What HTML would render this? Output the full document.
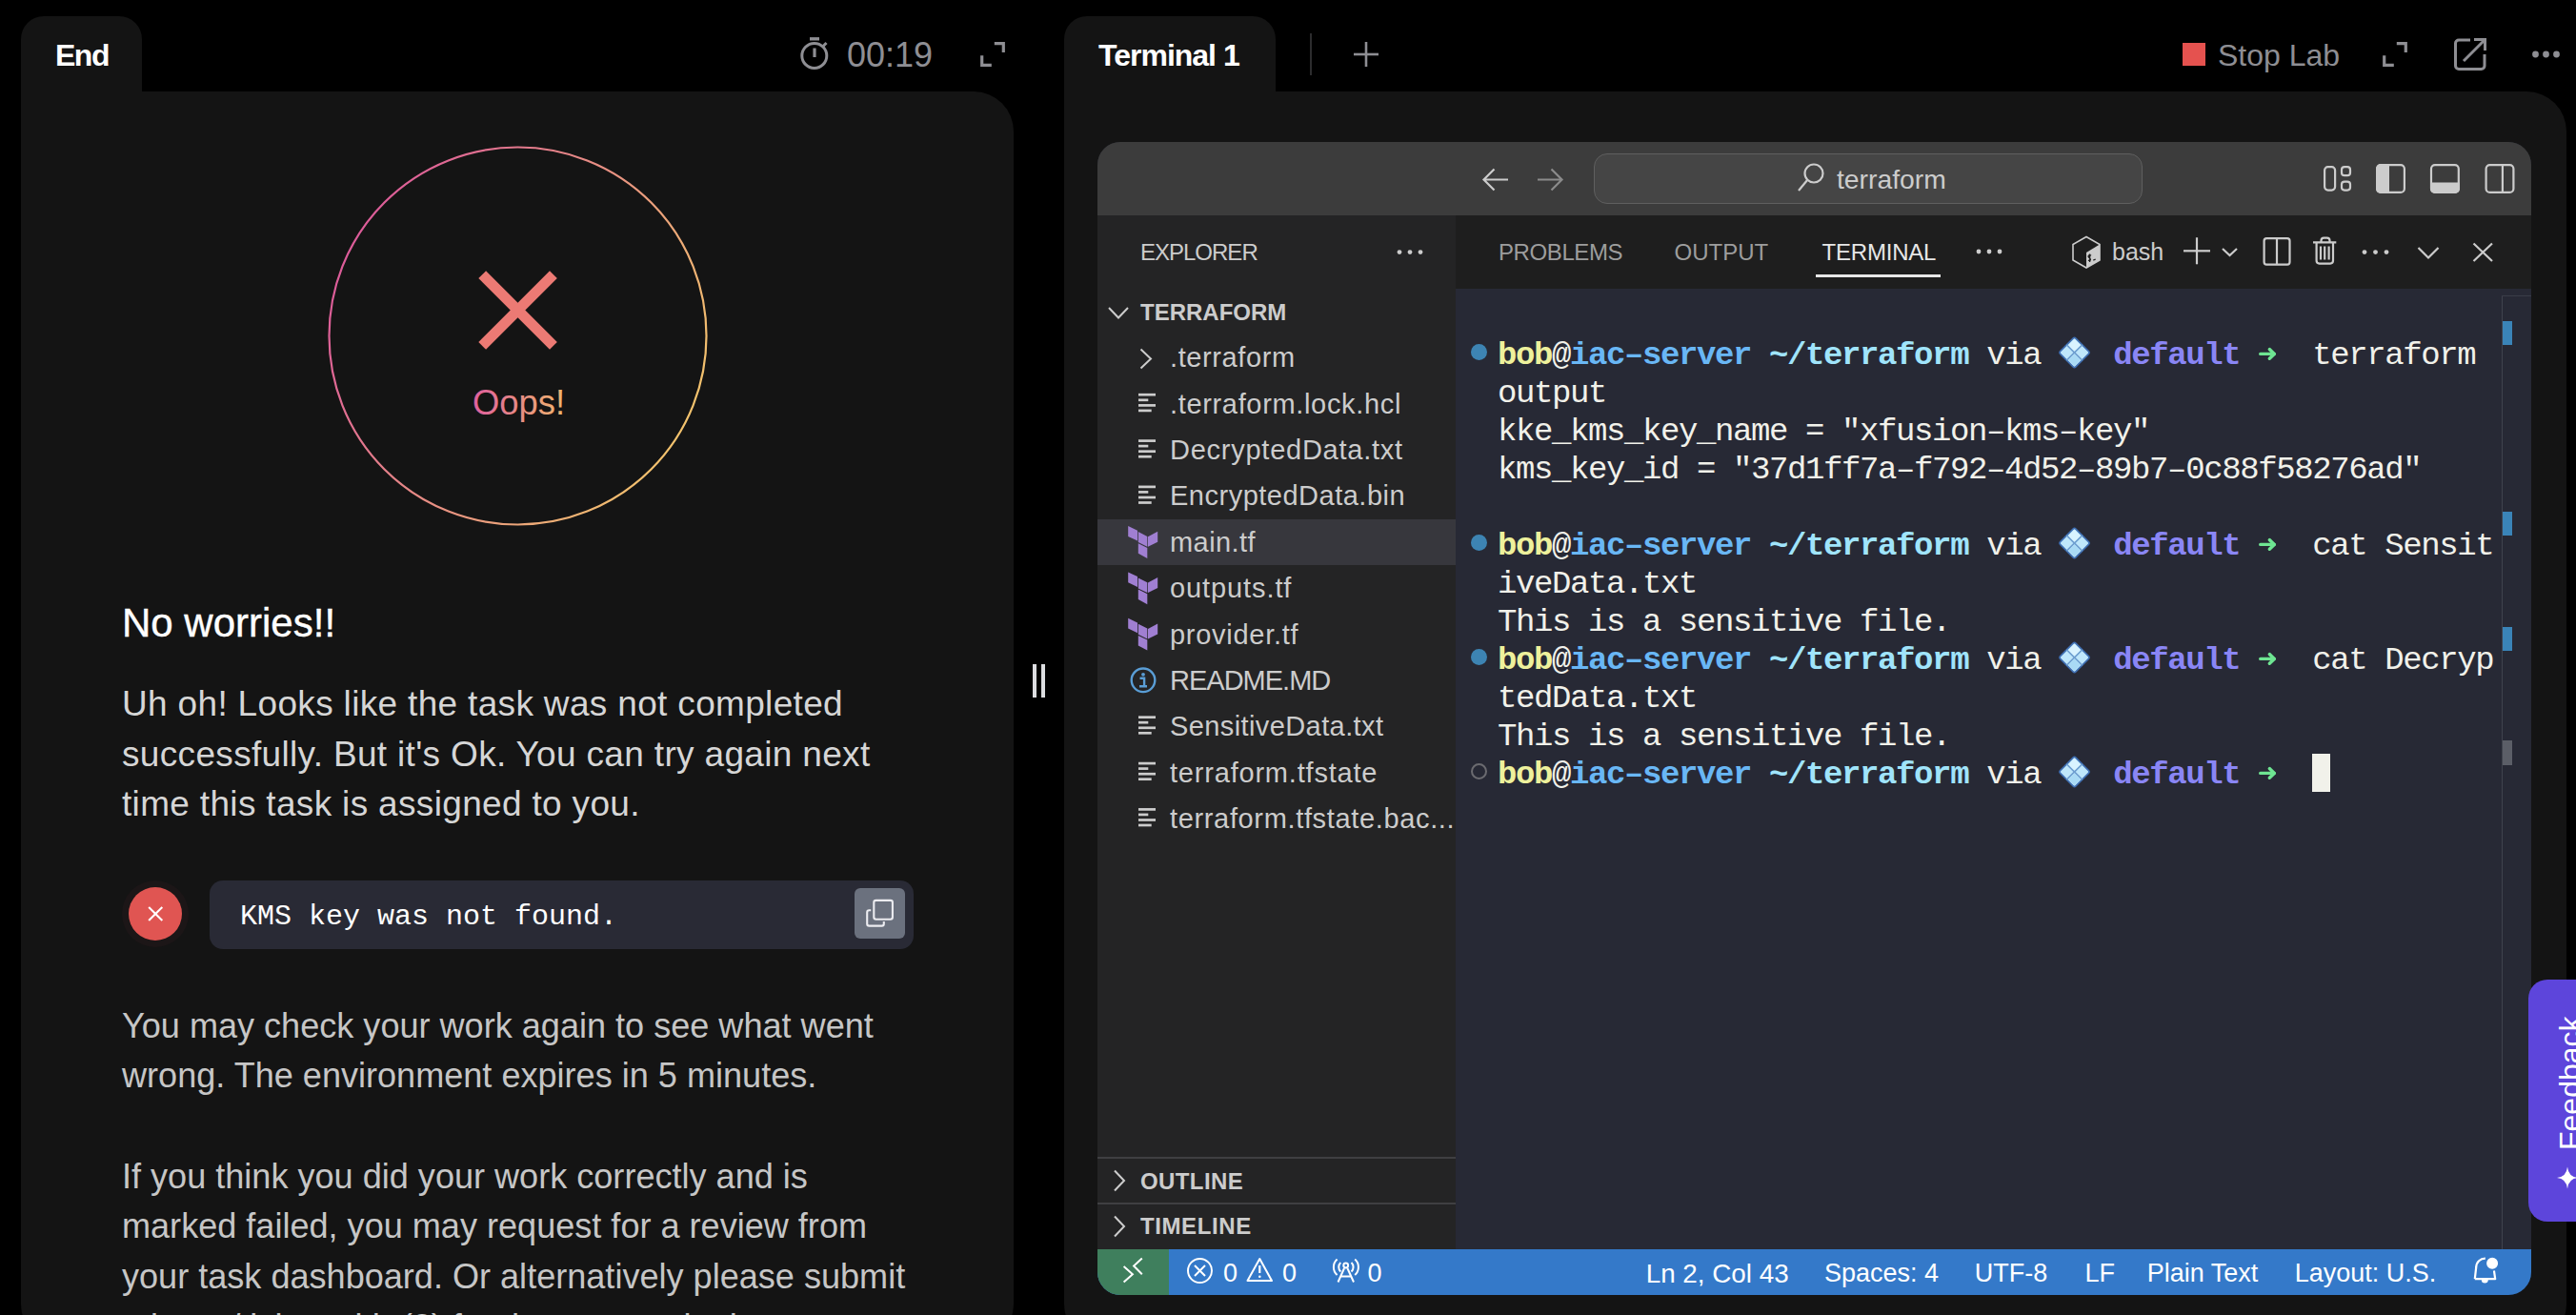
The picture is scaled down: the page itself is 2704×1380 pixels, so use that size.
<!DOCTYPE html>
<html><head><meta charset="utf-8">
<style>
*{margin:0;padding:0;box-sizing:border-box}
html,body{width:2704px;height:1380px;overflow:hidden;background:#000;font-family:"Liberation Sans",sans-serif}
.a{position:absolute}
.t{position:absolute;white-space:pre;line-height:1}
.m{font-family:"Liberation Mono",monospace}
svg{position:absolute;overflow:visible}
</style></head><body>

<!-- ============ LEFT PANEL ============ -->
<div class="a" style="left:22px;top:17px;width:127px;height:100px;background:#141414;border-radius:24px 24px 0 0"></div>
<div class="a" style="left:22px;top:96px;width:1042px;height:1315px;background:#141414;border-radius:0 42px 42px 42px"></div>
<div class="t" style="left:58px;top:41.8px;font-size:32px;font-weight:700;color:#fff;letter-spacing:-1.5px">End</div>

<!-- timer -->
<svg style="left:0;top:0" width="1" height="1">
  <g fill="none" stroke="#8e8e93" stroke-width="3">
    <circle cx="854.8" cy="58.4" r="13"/>
    <line x1="855" y1="50.5" x2="855" y2="60" stroke-width="3.2"/>
    <line x1="850" y1="40.8" x2="860" y2="40.8" stroke-width="3.4"/>
    <line x1="864" y1="48.5" x2="867.5" y2="45" stroke-width="3"/>
  </g>
</svg>
<div class="t" style="left:889px;top:39.6px;font-size:36px;color:#8e8e93">00:19</div>
<!-- expand -->
<svg style="left:0;top:0" width="1" height="1">
  <g fill="none" stroke="#8e8e93" stroke-width="3.2">
    <polyline points="1030.7,58.2 1030.7,68.3 1040.8,68.3"/>
    <polyline points="1043.8,45.7 1053.3,45.7 1053.3,55.1"/>
  </g>
</svg>

<!-- circle -->
<svg style="left:0;top:0" width="1" height="1">
  <defs>
    <linearGradient id="gc" x1="360" y1="260" x2="727" y2="445" gradientUnits="userSpaceOnUse">
      <stop offset="0" stop-color="#dc5a9a"/>
      <stop offset="1" stop-color="#f3c46c"/>
    </linearGradient>
    <linearGradient id="go" x1="496" y1="0" x2="590" y2="0" gradientUnits="userSpaceOnUse">
      <stop offset="0" stop-color="#df5f9e"/>
      <stop offset="1" stop-color="#efb46e"/>
    </linearGradient>
  </defs>
  <circle cx="543.5" cy="352.5" r="198" fill="none" stroke="url(#gc)" stroke-width="2.2"/>
  <g stroke="#ec7a74" stroke-width="11">
    <line x1="506.2" y1="288.2" x2="580.9" y2="362.9"/>
    <line x1="580.9" y1="288.2" x2="506.2" y2="362.9"/>
  </g>
  <text x="496" y="435.2" font-family="Liberation Sans" font-size="36.4" fill="url(#go)">Oops!</text>
</svg>

<div class="t" style="left:128px;top:633px;font-size:42px;color:#fff;-webkit-text-stroke:0.4px #fff">No worries!!</div>
<div class="t" style="left:128px;top:713px;font-size:37px;letter-spacing:0.33px;color:#d6d6d6;line-height:52.5px">Uh oh! Looks like the task was not completed
successfully. But it's Ok. You can try again next
time this task is assigned to you.</div>

<!-- error row -->
<div class="a" style="left:128px;top:923.7px;width:70px;height:70px;border-radius:50%;background:#1c1617"></div>
<div class="a" style="left:135px;top:930.7px;width:56px;height:56px;border-radius:50%;background:#e05552"></div>
<svg style="left:0;top:0" width="1" height="1">
  <g stroke="#fff" stroke-width="2.1"><line x1="156.2" y1="952" x2="170.3" y2="966.1"/><line x1="170.3" y1="952" x2="156.2" y2="966.1"/></g>
</svg>
<div class="a" style="left:220px;top:924px;width:739px;height:72px;border-radius:14px;background:#292a35"></div>
<div class="t m" style="left:252px;top:947px;font-size:30px;color:#fff">KMS key was not found.</div>
<div class="a" style="left:897px;top:932px;width:53px;height:53px;border-radius:6px;background:#6b717e"></div>
<svg style="left:0;top:0" width="1" height="1">
  <g fill="none" stroke="#ececf0" stroke-width="2.1">
    <rect x="917.3" y="944.9" width="19.6" height="19.8" rx="2.2"/>
    <path d="M914.2 955.3 h-1.8 a2.2 2.2 0 0 0 -2.2 2.2 V969.4 a2.2 2.2 0 0 0 2.2 2.2 H925.6 a2.2 2.2 0 0 0 2.2 -2.2 V967"/>
  </g>
</svg>

<div class="t" style="left:128px;top:1050.5px;font-size:36.1px;color:#c6c6c6;line-height:52.7px">You may check your work again to see what went
wrong. The environment expires in 5 minutes.

If you think you did your work correctly and is
marked failed, you may request for a review from
your task dashboard. Or alternatively please submit
a issue/ticket with (?) for the team to look.</div>

<!-- resize handle -->
<div class="a" style="left:1084px;top:697px;width:4px;height:35px;background:#dcdde0"></div>
<div class="a" style="left:1093px;top:697px;width:4px;height:35px;background:#dcdde0"></div>

<!-- ============ RIGHT PANEL ============ -->
<div class="a" style="left:1117px;top:17px;width:222px;height:100px;background:#141414;border-radius:24px 24px 0 0"></div>
<div class="a" style="left:1117px;top:96px;width:1577px;height:1315px;background:#141414;border-radius:0 42px 42px 42px"></div>
<div class="t" style="left:1153px;top:41.8px;font-size:32px;font-weight:700;color:#fff;letter-spacing:-1px">Terminal 1</div>
<div class="a" style="left:1375px;top:35px;width:2px;height:44px;background:#2c2c2e"></div>
<svg style="left:0;top:0" width="1" height="1">
  <g stroke="#8e8e93" stroke-width="2.6"><line x1="1421" y1="57" x2="1447" y2="57"/><line x1="1434" y1="44" x2="1434" y2="70"/></g>
</svg>
<div class="a" style="left:2291px;top:45px;width:24px;height:24px;background:#e5524f"></div>
<div class="t" style="left:2328px;top:41.6px;font-size:32px;color:#8e8e93">Stop Lab</div>
<svg style="left:0;top:0" width="1" height="1">
  <g fill="none" stroke="#8e8e93" stroke-width="3.2">
    <polyline points="2502.7,58.2 2502.7,68.3 2512.8,68.3"/>
    <polyline points="2515.8,45.7 2525.3,45.7 2525.3,55.1"/>
  </g>
  <g fill="none" stroke="#8e8e93" stroke-width="3">
    <path d="M2593 42 h-12 a3.5 3.5 0 0 0 -3.5 3.5 v23.5 a3.5 3.5 0 0 0 3.5 3.5 h23.5 a3.5 3.5 0 0 0 3.5 -3.5 v-12"/>
    <path d="M2597 41.5 h11.5 v11.5 M2608.5 41.5 L2586 64"/>
  </g>
  <g fill="#8e8e93"><circle cx="2661.5" cy="57" r="3.4"/><circle cx="2672.5" cy="57" r="3.4"/><circle cx="2683.5" cy="57" r="3.4"/></g>
</svg>

<!-- VSCODE WINDOW -->
<div id="vs" class="a" style="left:1152px;top:149px;width:1505px;height:1210px;border-radius:24px;overflow:hidden;background:#272935">
<div class="a" style="left:-1152px;top:-149px;width:2704px;height:1380px">
<!-- title bar -->
<div class="a" style="left:1152px;top:149px;width:1505px;height:77px;background:#3c3c3c"></div>
<svg style="left:0;top:0" width="1" height="1">
  <g fill="none" stroke="#cccccc" stroke-width="2.2"><path d="M1583 188.5 H1557.5 M1568.5 177.5 L1557.5 188.5 L1568.5 199.5"/></g>
  <g fill="none" stroke="#8b8b8b" stroke-width="2.2"><path d="M1614 188.5 H1639.5 M1628.5 177.5 L1639.5 188.5 L1628.5 199.5"/></g>
</svg>
<div class="a" style="left:1673px;top:161px;width:576px;height:53px;border-radius:14px;background:#454545;border:1.6px solid #5f5f5f"></div>
<svg style="left:0;top:0" width="1" height="1">
  <g fill="none" stroke="#cccccc" stroke-width="2.2"><circle cx="1904" cy="182" r="9.5"/><line x1="1897.3" y1="188.7" x2="1888" y2="200"/></g>
</svg>
<div class="t" style="left:1928px;top:173.5px;font-size:28.3px;color:#cccccc">terraform</div>
<svg style="left:0;top:0" width="1" height="1">
  <g fill="none" stroke="#cccccc" stroke-width="2.2">
    <rect x="2440.1" y="175.2" width="11" height="24.4" rx="3.5"/>
    <rect x="2458" y="175.2" width="9" height="9" rx="3"/>
    <rect x="2458" y="190.6" width="9" height="9" rx="3"/>
    <rect x="2495.1" y="173.1" width="28.8" height="28.8" rx="4"/>
    <rect x="2552" y="173.1" width="28.8" height="28.8" rx="4"/>
    <rect x="2609.6" y="173.1" width="28.8" height="28.8" rx="4"/>
    <line x1="2626.9" y1="173" x2="2626.9" y2="202"/>
  </g>
  <path d="M2499 172 h9 v31 h-9 a5 5 0 0 1 -5 -5 v-21 a5 5 0 0 1 5 -5z" fill="#cccccc"/>
  <path d="M2551 191.5 h31 v6.5 a5 5 0 0 1 -5 5 h-21 a5 5 0 0 1 -5 -5z" fill="#cccccc"/>
</svg>

<!-- sidebar -->
<div class="a" style="left:1152px;top:226px;width:376px;height:1085px;background:#242425"></div>
<div class="t" style="left:1197px;top:253.2px;font-size:24px;color:#cccccc;letter-spacing:-1px">EXPLORER</div>
<svg style="left:0;top:0" width="1" height="1"><g fill="#cccccc"><circle cx="1469" cy="264.6" r="2.4"/><circle cx="1480" cy="264.6" r="2.4"/><circle cx="1491" cy="264.6" r="2.4"/></g></svg>
<svg style="left:0;top:0" width="1" height="1"><polyline points="1164,323 1174,333.5 1184,323" fill="none" stroke="#cccccc" stroke-width="2"/></svg>
<div class="t" style="left:1197px;top:315.6px;font-size:24px;font-weight:700;color:#cccccc">TERRAFORM</div>
<div class="a" style="left:1152px;top:545px;width:376px;height:48px;background:#37373d"></div>
<div class="t" style="left:1228px;top:361.4px;font-size:29px;color:#cccccc;letter-spacing:0.6px">.terraform</div>
<svg style="left:0;top:0" width="1" height="1"><polyline points="1197.5,366.5 1208,376.5 1197.5,386.5" fill="none" stroke="#cccccc" stroke-width="2"/></svg>
<div class="t" style="left:1228px;top:409.7px;font-size:29px;color:#cccccc;letter-spacing:0.66px">.terraform.lock.hcl</div>
<svg style="left:0;top:0" width="1" height="1"><g stroke="#cccccc" stroke-width="2.7"><line x1="1195" y1="414.2" x2="1213" y2="414.2"/><line x1="1195" y1="419.8" x2="1205.3" y2="419.8"/><line x1="1195" y1="425.4" x2="1213" y2="425.4"/><line x1="1195" y1="430.9" x2="1208.7" y2="430.9"/></g></svg>
<div class="t" style="left:1228px;top:458.1px;font-size:29px;color:#cccccc;letter-spacing:0.75px">DecryptedData.txt</div>
<svg style="left:0;top:0" width="1" height="1"><g stroke="#cccccc" stroke-width="2.7"><line x1="1195" y1="462.6" x2="1213" y2="462.6"/><line x1="1195" y1="468.1" x2="1205.3" y2="468.1"/><line x1="1195" y1="473.7" x2="1213" y2="473.7"/><line x1="1195" y1="479.2" x2="1208.7" y2="479.2"/></g></svg>
<div class="t" style="left:1228px;top:506.4px;font-size:29px;color:#cccccc;letter-spacing:0.5px">EncryptedData.bin</div>
<svg style="left:0;top:0" width="1" height="1"><g stroke="#cccccc" stroke-width="2.7"><line x1="1195" y1="510.9" x2="1213" y2="510.9"/><line x1="1195" y1="516.4" x2="1205.3" y2="516.4"/><line x1="1195" y1="522.0" x2="1213" y2="522.0"/><line x1="1195" y1="527.5" x2="1208.7" y2="527.5"/></g></svg>
<div class="t" style="left:1228px;top:554.8px;font-size:29px;color:#cccccc;letter-spacing:0.43px">main.tf</div>
<svg style="left:0;top:0" width="1" height="1"><g fill="#a07fd2"><polygon points="1184.2,552.1 1194.0,556.7 1194.0,567.6 1184.2,562.9"/><polygon points="1194.8,558.1 1204.3,562.9 1204.3,573.8 1194.8,569.1"/><polygon points="1205.0,563.2 1215.2,557.8 1215.2,568.7 1205.0,573.8"/><polygon points="1194.8,570.2 1204.3,574.9 1204.3,585.9 1194.8,580.8"/></g></svg>
<div class="t" style="left:1228px;top:603.1px;font-size:29px;color:#cccccc;letter-spacing:0.9px">outputs.tf</div>
<svg style="left:0;top:0" width="1" height="1"><g fill="#a07fd2"><polygon points="1184.2,600.5 1194.0,605.0 1194.0,616.0 1184.2,611.2"/><polygon points="1194.8,606.5 1204.3,611.2 1204.3,622.1 1194.8,617.5"/><polygon points="1205.0,611.5 1215.2,606.1 1215.2,617.0 1205.0,622.1"/><polygon points="1194.8,618.5 1204.3,623.2 1204.3,634.2 1194.8,629.1"/></g></svg>
<div class="t" style="left:1228px;top:651.5px;font-size:29px;color:#cccccc;letter-spacing:0.72px">provider.tf</div>
<svg style="left:0;top:0" width="1" height="1"><g fill="#a07fd2"><polygon points="1184.2,648.8 1194.0,653.4 1194.0,664.3 1184.2,659.6"/><polygon points="1194.8,654.8 1204.3,659.6 1204.3,670.5 1194.8,665.8"/><polygon points="1205.0,659.9 1215.2,654.5 1215.2,665.4 1205.0,670.5"/><polygon points="1194.8,666.9 1204.3,671.6 1204.3,682.6 1194.8,677.5"/></g></svg>
<div class="t" style="left:1228px;top:699.8px;font-size:29px;color:#cccccc;letter-spacing:-1px">README.MD</div>
<svg style="left:0;top:0" width="1" height="1"><circle cx="1200" cy="713.8" r="12.3" fill="none" stroke="#5a9ed6" stroke-width="2.4"/><circle cx="1200" cy="707.8" r="1.9" fill="#5a9ed6"/><path d="M1196.5 711.8 h4.6 v8.5 M1196 720.2 h8" fill="none" stroke="#5a9ed6" stroke-width="2.4"/></svg>
<div class="t" style="left:1228px;top:748.1px;font-size:29px;color:#cccccc;letter-spacing:0.4px">SensitiveData.txt</div>
<svg style="left:0;top:0" width="1" height="1"><g stroke="#cccccc" stroke-width="2.7"><line x1="1195" y1="752.7" x2="1213" y2="752.7"/><line x1="1195" y1="758.2" x2="1205.3" y2="758.2"/><line x1="1195" y1="763.8" x2="1213" y2="763.8"/><line x1="1195" y1="769.3" x2="1208.7" y2="769.3"/></g></svg>
<div class="t" style="left:1228px;top:796.5px;font-size:29px;color:#cccccc;letter-spacing:0.8px">terraform.tfstate</div>
<svg style="left:0;top:0" width="1" height="1"><g stroke="#cccccc" stroke-width="2.7"><line x1="1195" y1="801.1" x2="1213" y2="801.1"/><line x1="1195" y1="806.6" x2="1205.3" y2="806.6"/><line x1="1195" y1="812.2" x2="1213" y2="812.2"/><line x1="1195" y1="817.7" x2="1208.7" y2="817.7"/></g></svg>
<div class="t" style="left:1228px;top:844.9px;font-size:29px;color:#cccccc;letter-spacing:0.65px">terraform.tfstate.bac...</div>
<svg style="left:0;top:0" width="1" height="1"><g stroke="#cccccc" stroke-width="2.7"><line x1="1195" y1="849.4" x2="1213" y2="849.4"/><line x1="1195" y1="854.9" x2="1205.3" y2="854.9"/><line x1="1195" y1="860.5" x2="1213" y2="860.5"/><line x1="1195" y1="866.0" x2="1208.7" y2="866.0"/></g></svg>
<div class="a" style="left:1152px;top:1214px;width:376px;height:2px;background:#3f3f42"></div>
<div class="a" style="left:1152px;top:1262px;width:376px;height:2px;background:#3f3f42"></div>
<svg style="left:0;top:0" width="1" height="1"><g fill="none" stroke="#cccccc" stroke-width="2"><polyline points="1170,1228.5 1180,1239 1170,1249.5"/><polyline points="1170,1276.5 1180,1287 1170,1297.5"/></g></svg>
<div class="t" style="left:1197px;top:1227.6px;font-size:24px;font-weight:700;color:#cccccc;letter-spacing:0.4px">OUTLINE</div>
<div class="t" style="left:1197px;top:1274.9px;font-size:24px;font-weight:700;color:#cccccc;letter-spacing:0.6px">TIMELINE</div>

<!-- panel header -->
<div class="a" style="left:1528px;top:226px;width:1129px;height:77px;background:#1e1e1e"></div>
<div class="t" style="left:1573px;top:252.6px;font-size:24px;color:#9d9d9d;letter-spacing:-0.4px">PROBLEMS</div>
<div class="t" style="left:1757.6px;top:252.6px;font-size:24px;color:#9d9d9d">OUTPUT</div>
<div class="t" style="left:1912.5px;top:252.6px;font-size:24px;color:#e7e7e7;letter-spacing:-0.2px">TERMINAL</div>
<div class="a" style="left:1906px;top:288px;width:131px;height:2.5px;background:#e7e7e7"></div>
<svg style="left:0;top:0" width="1" height="1"><g fill="#cccccc"><circle cx="2077" cy="264" r="2.4"/><circle cx="2088" cy="264" r="2.4"/><circle cx="2099" cy="264" r="2.4"/></g></svg>
<svg style="left:0;top:0" width="1" height="1">
  <path d="M2190 248.5 L2204 256.5 V273 L2190 281 L2176 273 V256.5 Z" fill="none" stroke="#cccccc" stroke-width="1.6"/>
  <path d="M2190 265 L2204 256.5 V273 L2190 281 Z" fill="#cccccc"/>
  <path d="M2195 268.3 q-1.3 -1.2 -2.5 -0.2 q-1 1 0.3 2.2 q1.6 1 1.6 2.2 q-0.4 1.6 -2.4 0.6 M2193.6 266.5 v8.5 M2197.3 273.2 l2.4 -1.2" stroke="#1e1e1e" stroke-width="1.3" fill="none"/>
</svg>
<div class="t" style="left:2217px;top:251.75px;font-size:25px;color:#cccccc">bash</div>
<svg style="left:0;top:0" width="1" height="1">
  <g fill="none" stroke="#cccccc" stroke-width="2.2">
    <line x1="2292" y1="263.3" x2="2320" y2="263.3"/><line x1="2306" y1="249.3" x2="2306" y2="277.3"/>
    <polyline points="2333,261 2340.5,268 2348,261"/>
    <rect x="2376.6" y="250.2" width="26.9" height="27.4" rx="2.6"/><line x1="2390" y1="250" x2="2390" y2="278"/>
    <path d="M2428 254.4 H2452.3 M2436.5 254.4 V252.5 a2.8 2.8 0 0 1 2.8 -2.8 h3.4 a2.8 2.8 0 0 1 2.8 2.8 V254.4 M2431.6 254.4 V273.6 a3 3 0 0 0 3 3 H2446 a3 3 0 0 0 3 -3 V254.4 M2436 258.6 V272.5 M2440.2 258.6 V272.5 M2444.6 258.6 V272.5"/>
    <polyline points="2538.5,260 2549,270.5 2559.5,260"/>
    <path d="M2596.5 255.5 L2616 274 M2616 255.5 L2596.5 274"/>
  </g>
  <g fill="#cccccc"><circle cx="2482" cy="264.6" r="2.4"/><circle cx="2493.5" cy="264.6" r="2.4"/><circle cx="2505" cy="264.6" r="2.4"/></g>
</svg>

<!-- terminal -->
<div class="t m" style="left:1572px;top:353px;font-size:34px;letter-spacing:-1.4px;line-height:40px;color:#f1f1ea"><b style="color:#eef19c">bob</b>@<b style="color:#69b7f5">iac&#8211;server</b> <b style="color:#a0e4fb">~/terraform</b> via    <b style="color:#8a86f5">default</b>    terraform
output
kke_kms_key_name = "xfusion&#8211;kms&#8211;key"
kms_key_id = "37d1ff7a&#8211;f792&#8211;4d52&#8211;89b7&#8211;0c88f58276ad"

<b style="color:#eef19c">bob</b>@<b style="color:#69b7f5">iac&#8211;server</b> <b style="color:#a0e4fb">~/terraform</b> via    <b style="color:#8a86f5">default</b>    cat Sensit
iveData.txt
This is a sensitive file.
<b style="color:#eef19c">bob</b>@<b style="color:#69b7f5">iac&#8211;server</b> <b style="color:#a0e4fb">~/terraform</b> via    <b style="color:#8a86f5">default</b>    cat Decryp
tedData.txt
This is a sensitive file.
<b style="color:#eef19c">bob</b>@<b style="color:#69b7f5">iac&#8211;server</b> <b style="color:#a0e4fb">~/terraform</b> via    <b style="color:#8a86f5">default</b>    </div>
<div class="a" style="left:1544px;top:361.0px;width:17px;height:17px;border-radius:50%;background:#3d84b3"></div>
<svg style="left:0;top:0" width="1" height="1"><g transform="translate(2177.5,370) rotate(45)"><rect x="-11.5" y="-11.5" width="23" height="23" rx="2" fill="#bfe7fb" stroke="#3f6fb3" stroke-width="1.6"/><line x1="0" y1="-11.5" x2="0" y2="11.5" stroke="#6f9fd0" stroke-width="1.6"/><line x1="-11.5" y1="0" x2="11.5" y2="0" stroke="#6f9fd0" stroke-width="1.6"/><rect x="-10" y="-10" width="9" height="9" fill="#d9f3ff"/><rect x="1" y="1" width="9" height="9" fill="#a9daf5"/></g></svg>
<svg style="left:0;top:0" width="1" height="1"><g fill="none" stroke="#6ee592" stroke-width="3.4" stroke-linecap="round" stroke-linejoin="round"><line x1="2372.7" y1="371.4" x2="2387.3" y2="371.4"/><polyline points="2382.3,366.59999999999997 2387.3,371.4 2382.3,376.2"/></g></svg>
<div class="a" style="left:1544px;top:561.0px;width:17px;height:17px;border-radius:50%;background:#3d84b3"></div>
<svg style="left:0;top:0" width="1" height="1"><g transform="translate(2177.5,570) rotate(45)"><rect x="-11.5" y="-11.5" width="23" height="23" rx="2" fill="#bfe7fb" stroke="#3f6fb3" stroke-width="1.6"/><line x1="0" y1="-11.5" x2="0" y2="11.5" stroke="#6f9fd0" stroke-width="1.6"/><line x1="-11.5" y1="0" x2="11.5" y2="0" stroke="#6f9fd0" stroke-width="1.6"/><rect x="-10" y="-10" width="9" height="9" fill="#d9f3ff"/><rect x="1" y="1" width="9" height="9" fill="#a9daf5"/></g></svg>
<svg style="left:0;top:0" width="1" height="1"><g fill="none" stroke="#6ee592" stroke-width="3.4" stroke-linecap="round" stroke-linejoin="round"><line x1="2372.7" y1="571.4" x2="2387.3" y2="571.4"/><polyline points="2382.3,566.6 2387.3,571.4 2382.3,576.1999999999999"/></g></svg>
<div class="a" style="left:1544px;top:681.0px;width:17px;height:17px;border-radius:50%;background:#3d84b3"></div>
<svg style="left:0;top:0" width="1" height="1"><g transform="translate(2177.5,690) rotate(45)"><rect x="-11.5" y="-11.5" width="23" height="23" rx="2" fill="#bfe7fb" stroke="#3f6fb3" stroke-width="1.6"/><line x1="0" y1="-11.5" x2="0" y2="11.5" stroke="#6f9fd0" stroke-width="1.6"/><line x1="-11.5" y1="0" x2="11.5" y2="0" stroke="#6f9fd0" stroke-width="1.6"/><rect x="-10" y="-10" width="9" height="9" fill="#d9f3ff"/><rect x="1" y="1" width="9" height="9" fill="#a9daf5"/></g></svg>
<svg style="left:0;top:0" width="1" height="1"><g fill="none" stroke="#6ee592" stroke-width="3.4" stroke-linecap="round" stroke-linejoin="round"><line x1="2372.7" y1="691.4" x2="2387.3" y2="691.4"/><polyline points="2382.3,686.6 2387.3,691.4 2382.3,696.1999999999999"/></g></svg>
<div class="a" style="left:1544px;top:801.0px;width:17px;height:17px;border-radius:50%;border:2.4px solid #6b6b70"></div>
<svg style="left:0;top:0" width="1" height="1"><g transform="translate(2177.5,810) rotate(45)"><rect x="-11.5" y="-11.5" width="23" height="23" rx="2" fill="#bfe7fb" stroke="#3f6fb3" stroke-width="1.6"/><line x1="0" y1="-11.5" x2="0" y2="11.5" stroke="#6f9fd0" stroke-width="1.6"/><line x1="-11.5" y1="0" x2="11.5" y2="0" stroke="#6f9fd0" stroke-width="1.6"/><rect x="-10" y="-10" width="9" height="9" fill="#d9f3ff"/><rect x="1" y="1" width="9" height="9" fill="#a9daf5"/></g></svg>
<svg style="left:0;top:0" width="1" height="1"><g fill="none" stroke="#6ee592" stroke-width="3.4" stroke-linecap="round" stroke-linejoin="round"><line x1="2372.7" y1="811.4" x2="2387.3" y2="811.4"/><polyline points="2382.3,806.6 2387.3,811.4 2382.3,816.1999999999999"/></g></svg>
<div class="a" style="left:2427px;top:791px;width:19px;height:40px;background:#f1f1ea"></div>
<div class="a" style="left:2626px;top:310px;width:1px;height:1001px;background:#3f424d"></div>
<div class="a" style="left:2626px;top:310px;width:31px;height:1px;background:#3a3d48"></div>
<div class="a" style="left:2627px;top:337px;width:10px;height:25px;background:#3a84b8"></div>
<div class="a" style="left:2627px;top:537px;width:10px;height:25px;background:#3a84b8"></div>
<div class="a" style="left:2627px;top:658px;width:10px;height:25px;background:#3a84b8"></div>
<div class="a" style="left:2627px;top:777px;width:10px;height:26px;background:#5b5e67"></div>

<!-- status bar -->
<div class="a" style="left:1152px;top:1311px;width:1505px;height:48px;background:#3479c9"></div>
<div class="a" style="left:1152px;top:1311px;width:75px;height:48px;background:#3f7f5d"></div>
<svg style="left:0;top:0" width="1" height="1">
  <g fill="none" stroke="#ffffff" stroke-width="2">
    <polyline points="1179.6,1329.1 1188.9,1337.3 1179.6,1345.6"/>
    <polyline points="1198.8,1320.4 1190.1,1328.5 1198.8,1337.3"/>
    <circle cx="1259.5" cy="1333.5" r="12.5"/><path d="M1254 1328 L1265 1339 M1265 1328 L1254 1339"/>
    <path d="M1322.3 1321 L1335 1344 H1309.5 Z" stroke-linejoin="round"/>
    <path d="M1403.6 1321.5 a11 11 0 0 0 0 16.5 M1407.3 1325 a6.5 6.5 0 0 0 0 9.5 M1422.2 1321.5 a11 11 0 0 1 0 16.5 M1418.5 1325 a6.5 6.5 0 0 1 0 9.5"/>
    <circle cx="1412.7" cy="1328" r="2.4"/>
    <path d="M1411 1331 L1404.5 1345.5 M1414.4 1331 L1421 1345.5 M1407.5 1339.5 H1418"/>
    <path d="M2597.8 1342.2 H2619.2 L2617.8 1332.5 M2597.8 1342.2 L2599.2 1330 a9.5 9.5 0 0 1 9.6 -9.4" stroke-width="2.2" stroke-linejoin="round"/>
  </g>
  <g fill="#fff"><rect x="1321.2" y="1328" width="2.2" height="8"/><circle cx="1322.3" cy="1339.7" r="1.3"/><circle cx="2616.1" cy="1325.8" r="7" stroke="#3479c9" stroke-width="2"/><path d="M2604.8 1343 a3.5 3.5 0 0 0 7 0z"/></g>
</svg>
<div class="t" style="left:1284px;top:1322.5px;font-size:27px;color:#fff">0</div>
<div class="t" style="left:1346px;top:1322.5px;font-size:27px;color:#fff">0</div>
<div class="t" style="left:1435.5px;top:1322.5px;font-size:27px;color:#fff">0</div>
<div class="t" style="left:1727.7px;top:1322.5px;font-size:27.8px;color:#fff">Ln 2, Col 43</div>
<div class="t" style="left:1915px;top:1322.5px;font-size:27px;color:#fff">Spaces: 4</div>
<div class="t" style="left:2072.8px;top:1322.5px;font-size:27px;color:#fff">UTF-8</div>
<div class="t" style="left:2188.5px;top:1322.5px;font-size:27px;color:#fff">LF</div>
<div class="t" style="left:2253.7px;top:1322.5px;font-size:27px;color:#fff">Plain Text</div>
<div class="t" style="left:2408.8px;top:1322.5px;font-size:27px;color:#fff">Layout: U.S.</div>
</div>
</div>

<!-- feedback tab -->
<div class="a" style="left:2654px;top:1028px;width:80px;height:254px;border-radius:20px;background:#5d45db"></div>
<div class="t" style="left:2682px;top:1207px;font-size:32px;color:#fff;transform-origin:0 0;transform:rotate(-90deg)">Feedback</div>
<svg style="left:0;top:0" width="1" height="1"><path d="M2695 1224.5 Q2696 1235 2706 1236 Q2696 1237 2695 1247.5 Q2694 1237 2684 1236 Q2694 1235 2695 1224.5Z" fill="#fff"/></svg>


</body></html>
